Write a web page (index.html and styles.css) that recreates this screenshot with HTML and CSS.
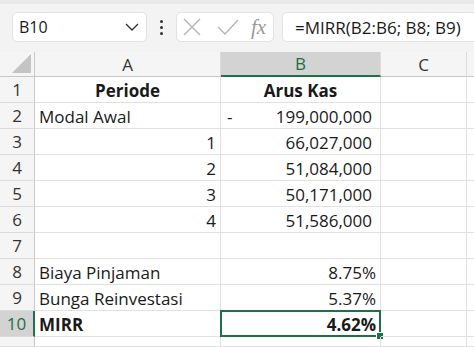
FILE: index.html
```html
<!DOCTYPE html>
<html lang="id">
<head>
    <meta charset="UTF-8">
    <meta name="viewport" content="width=device-width, initial-scale=1.0">
    <title>MIRR</title>
    <link rel="stylesheet" href="styles.css">
</head>
<body>

<div class="formula-bar">
    <div class="name-box">
        <span>B10</span>
        <svg class="chevron" width="14" height="8" viewBox="0 0 14 8"><path d="M1 1 L7 7 L13 1" fill="none" stroke="#333" stroke-width="1.4"/></svg>
    </div>
    <div class="dots"><i></i><i></i><i></i></div>
    <div class="fx-box">
        <svg width="18" height="18" viewBox="0 0 18 18"><path d="M1 1 L17 17 M17 1 L1 17" stroke="#b5b5b5" stroke-width="1.4" fill="none"/></svg>
        <svg width="22" height="16" viewBox="0 0 22 16"><path d="M1 8 L8 15 L21 1" stroke="#b5b5b5" stroke-width="1.4" fill="none"/></svg>
        <span class="fx">fx</span>
    </div>
    <div class="formula-input">=MIRR(B2:B6; B8; B9)</div>
</div>

<div class="sheet">
    <!-- header -->
    <div class="corner"><span class="tri"></span></div>
    <div class="col-head">A</div>
    <div class="col-head active">B</div>
    <div class="col-head">C</div>
    <div class="col-head"></div>

    <div class="row-head">1</div>
    <div class="cell center bold">Periode</div>
    <div class="cell center bold">Arus Kas</div>
    <div class="cell"></div><div class="cell"></div>

    <div class="row-head">2</div>
    <div class="cell">Modal Awal</div>
    <div class="cell acc"><span>-</span><span>199,000,000</span></div>
    <div class="cell"></div><div class="cell"></div>

    <div class="row-head">3</div>
    <div class="cell num">1</div>
    <div class="cell acc"><span></span><span>66,027,000</span></div>
    <div class="cell"></div><div class="cell"></div>

    <div class="row-head">4</div>
    <div class="cell num">2</div>
    <div class="cell acc"><span></span><span>51,084,000</span></div>
    <div class="cell"></div><div class="cell"></div>

    <div class="row-head">5</div>
    <div class="cell num">3</div>
    <div class="cell acc"><span></span><span>50,171,000</span></div>
    <div class="cell"></div><div class="cell"></div>

    <div class="row-head">6</div>
    <div class="cell num">4</div>
    <div class="cell acc"><span></span><span>51,586,000</span></div>
    <div class="cell"></div><div class="cell"></div>

    <div class="row-head">7</div>
    <div class="cell"></div>
    <div class="cell"></div>
    <div class="cell"></div><div class="cell"></div>

    <div class="row-head">8</div>
    <div class="cell">Biaya Pinjaman</div>
    <div class="cell num">8.75%</div>
    <div class="cell"></div><div class="cell"></div>

    <div class="row-head">9</div>
    <div class="cell">Bunga Reinvestasi</div>
    <div class="cell num">5.37%</div>
    <div class="cell"></div><div class="cell"></div>

    <div class="row-head active">10</div>
    <div class="cell bold">MIRR</div>
    <div class="cell num bold selected">4.62%<span class="handle"></span></div>
    <div class="cell"></div><div class="cell"></div>

    <div class="row-head"></div>
    <div class="cell"></div>
    <div class="cell"></div>
    <div class="cell"></div><div class="cell"></div>
</div>

</body>
</html>
```

FILE: styles.css
```css
body {
    margin: 0;
    font-family: "Open Sans", Arial, sans-serif;
    color: #1a1a1a;
    background-color: #ffffff;
    width: 474px;
    height: 347px;
    overflow: hidden;
}
.formula-bar {
    display: flex;
    align-items: flex-start;
    height: 52px;
    padding: 8px 0 0 12px;
    box-sizing: border-box;
    background-color: #f3f3f3;
    border-top: 4px solid #e9e9e9;
}
.name-box,
.fx-box,
.formula-input {
    height: 30px;
    background-color: #ffffff;
    border: 1px solid #e2e2e2;
    border-radius: 5px;
    box-sizing: border-box;
    display: flex;
    align-items: center;
}
.name-box {
    width: 135px;
    padding: 0 7px 0 6px;
    justify-content: space-between;
    font-size: 16px;
}
.dots {
    width: 29px;
    height: 30px;
    display: flex;
    flex-direction: column;
    align-items: center;
    justify-content: center;
    gap: 3px;
}
.dots i {
    width: 3px;
    height: 3px;
    border-radius: 50%;
    background-color: #333;
}
.fx-box {
    width: 98px;
    padding: 0 6px 0 6px;
    gap: 16px;
}
.fx {
    font-family: "Liberation Serif", serif;
    font-style: italic;
    font-size: 21px;
    color: #9a9a9a;
    margin-left: -4px;
}
.formula-input {
    margin-left: 8px;
    flex: 1;
    border-right: none;
    border-radius: 5px 0 0 5px;
    padding-left: 12px;
    font-size: 17px;
}
.sheet {
    display: grid;
    grid-template-columns: 35px 186px 160px 86px 1fr;
    grid-template-rows: 25px repeat(10, 26px) 1fr;
    height: 295px;
    font-size: 17px;
}
.corner {
    background-color: #f5f5f5;
    border-right: 1px solid #c8c8c8;
    border-bottom: 1px solid #c8c8c8;
    position: relative;
}
.tri {
    position: absolute;
    right: 3px;
    bottom: 3px;
    width: 0;
    height: 0;
    border-left: 19px solid transparent;
    border-bottom: 19px solid #c4c4c4;
}
.col-head {
    background-color: #f5f5f5;
    border-right: 1px solid #dcdcdc;
    border-bottom: 1px solid #c8c8c8;
    display: flex;
    align-items: center;
    justify-content: center;
    color: #333;
}
.col-head.active {
    background-color: #d3d3d3;
    color: #1e6e42;
    border-bottom: 2px solid #1e7145;
}
.row-head {
    background-color: #f5f5f5;
    border-right: 1px solid #c8c8c8;
    border-bottom: 1px solid #dcdcdc;
    display: flex;
    align-items: center;
    justify-content: center;
    color: #333;
}
.row-head.active {
    background-color: #d3d3d3;
    color: #1e6e42;
    border-right: 2px solid #1e7145;
}
.cell {
    border-right: 1px solid #e1e1e1;
    border-bottom: 1px solid #e1e1e1;
    display: flex;
    align-items: center;
    padding: 1px 4px 0 4px;
    white-space: nowrap;
    position: relative;
}
.center { justify-content: center; }
.num { justify-content: flex-end; }
.bold { font-weight: bold; }
.acc {
    justify-content: space-between;
    padding: 1px 8px 0 6px;
}
.selected {
    border: 2px solid #1e7145;
    margin: -1px 0 0 -1px;
    padding-right: 3px;
}
.handle {
    position: absolute;
    right: -5px;
    bottom: -5px;
    width: 6px;
    height: 6px;
    background-color: #1e7145;
    border: 1px solid #ffffff;
}
```
